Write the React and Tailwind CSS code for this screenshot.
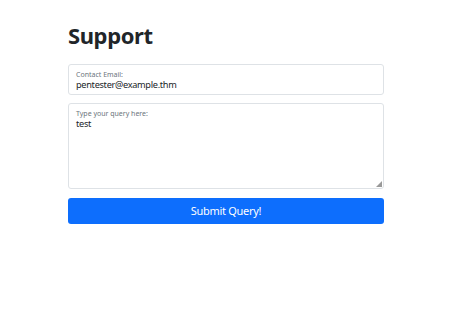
import React from "react";

export default function App() {
  return (
    <div className="w-[474px] h-[312px] bg-white" style={{ fontFamily: '"Noto Sans", "Open Sans", sans-serif' }}>
      <div className="ml-[68px] w-[316px] pt-[21px] flex flex-col">
        <h1 className="text-[22px] leading-[28px] font-bold text-[#212529] tracking-[-0.4px]">Support</h1>
        <div className="mt-[15px] h-[31px] border border-[#dee2e6] rounded-[3px] px-[7px] pt-[5px] flex flex-col">
          <span className="text-[7px] leading-[9px] text-[#6c757d]">Contact Email:</span>
          <span className="text-[9.2px] leading-[12px] text-[#212529] tracking-[-0.3px]">pentester@example.thm</span>
        </div>
        <div className="mt-[8px] h-[86px] border border-[#dee2e6] rounded-[3px] px-[7px] pt-[5px] flex flex-col relative">
          <span className="text-[7px] leading-[9px] text-[#6c757d]">Type your query here:</span>
          <span className="text-[9.2px] leading-[12px] text-[#212529] tracking-[-0.3px]">test</span>
          <svg className="absolute right-[1px] bottom-[1px]" width="6" height="6" viewBox="0 0 6 6">
            <path d="M6 0 L6 6 L0 6 Z" fill="#999" />
          </svg>
        </div>
        <button className="mt-[9px] h-[26px] bg-[#0d6efd] rounded-[3px] text-white text-[11px] tracking-[-0.3px]">Submit Query!</button>
      </div>
    </div>
  );
}
